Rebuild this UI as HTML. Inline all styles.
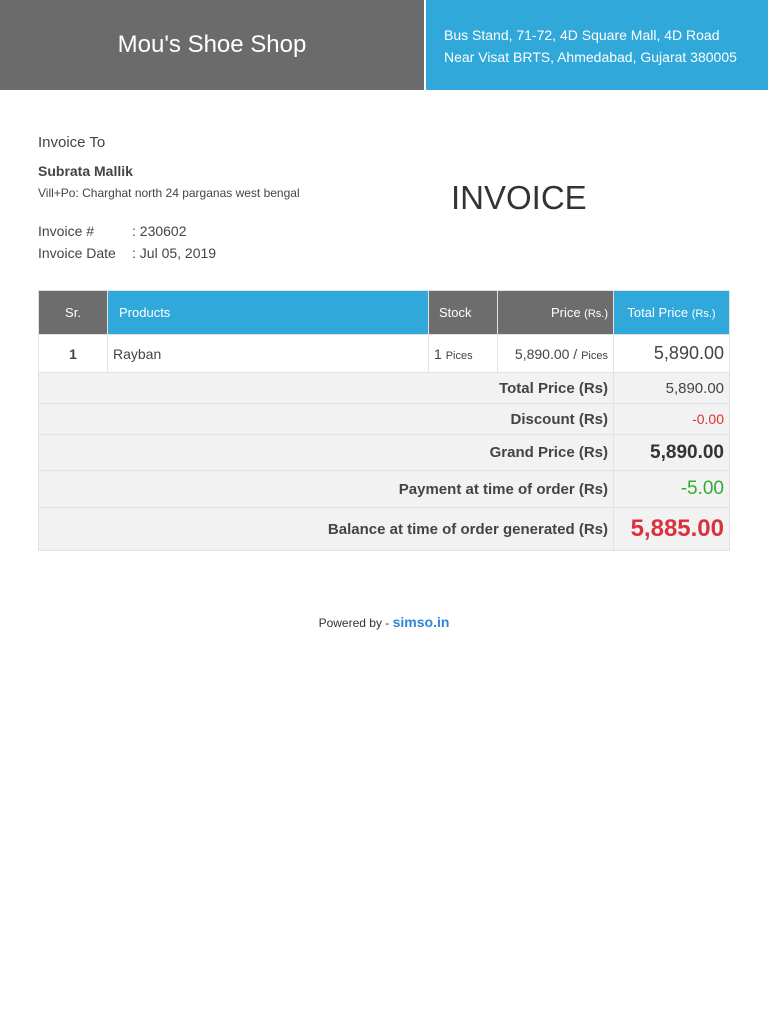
<!DOCTYPE html>
<html><head><style>
body{margin:0;width:768px;height:1024px;background:#fff;font-family:"Liberation Sans",sans-serif;color:#444;position:relative;overflow:hidden}
.a{position:absolute}
.hl{left:0;top:0;width:424px;height:90px;background:#6b6b6b;color:#fff;font-size:24px;line-height:90px;text-align:center}
.hr{left:426px;top:0;width:342px;height:90px;background:#30a8da;color:#fff;font-size:14px;line-height:22px}
table{position:absolute;left:38px;top:290px;width:692px;border-collapse:collapse;font-size:14px}
td{border:1px solid #e2e2e2;padding:0 5px;box-sizing:border-box}
.g{background:#6d6d6d;color:#fff}.b{background:#31a8da;color:#fff}
.s{background:#f2f2f2}
.s td:first-child{font-size:15px}
small{font-size:11px}
</style></head><body>
<div class="a hl">Mou's Shoe Shop</div>
<div class="a hr"><div style="position:absolute;left:18px;top:24px">Bus Stand, 71-72, 4D Square Mall, 4D Road<br>Near Visat BRTS, Ahmedabad, Gujarat 380005</div></div>
<div class="a" style="left:38px;top:134px;font-size:15px">Invoice To</div>
<div class="a" style="left:38px;top:163px;font-size:14px;font-weight:bold">Subrata Mallik</div>
<div class="a" style="left:38px;top:186px;font-size:12px">Vill+Po: Charghat north 24 parganas west bengal</div>
<div class="a" style="left:38px;top:220px;font-size:14px;line-height:22px">Invoice #<br>Invoice Date</div>
<div class="a" style="left:132px;top:220px;font-size:14px;line-height:22px">: 230602<br>: Jul 05, 2019</div>
<div class="a" style="left:451px;top:179px;font-size:33px;color:#333">INVOICE</div>
<table>
<tr style="height:44px;font-size:13px"><td class="g" style="width:69px;text-align:center">Sr.</td><td class="b" style="width:321px;padding-left:11px">Products</td><td class="g" style="width:69px;padding-left:10px">Stock</td><td class="g" style="width:116px;text-align:right">Price <small>(Rs.)</small></td><td class="b" style="text-align:center">Total Price <small>(Rs.)</small></td></tr>
<tr style="height:38px"><td style="text-align:center;font-weight:bold">1</td><td>Rayban</td><td>1 <small>Pices</small></td><td style="text-align:right">5,890.00 / <small>Pices</small></td><td style="text-align:right;font-size:18px">5,890.00</td></tr>
<tr class="s" style="height:31px"><td colspan="4" style="text-align:right;font-weight:bold">Total Price (Rs)</td><td style="text-align:right;font-size:15px">5,890.00</td></tr>
<tr class="s" style="height:31px"><td colspan="4" style="text-align:right;font-weight:bold">Discount (Rs)</td><td style="text-align:right;color:#d33;font-size:14px">-0.00</td></tr>
<tr class="s" style="height:36px"><td colspan="4" style="text-align:right;font-weight:bold">Grand Price (Rs)</td><td style="text-align:right;font-size:19px;font-weight:bold;color:#333">5,890.00</td></tr>
<tr class="s" style="height:37px"><td colspan="4" style="text-align:right;font-weight:bold">Payment at time of order (Rs)</td><td style="text-align:right;font-size:19px;color:#3a3">-5.00</td></tr>
<tr class="s" style="height:43px"><td colspan="4" style="text-align:right;font-weight:bold">Balance at time of order generated (Rs)</td><td style="text-align:right;font-size:24px;font-weight:bold;color:#d9323f">5,885.00</td></tr>
</table>
<div class="a" style="left:0;width:768px;top:614px;text-align:center;font-size:12px;color:#333">Powered by - <b style="color:#2f86d6;font-size:14px">simso.in</b></div>
</body></html>
